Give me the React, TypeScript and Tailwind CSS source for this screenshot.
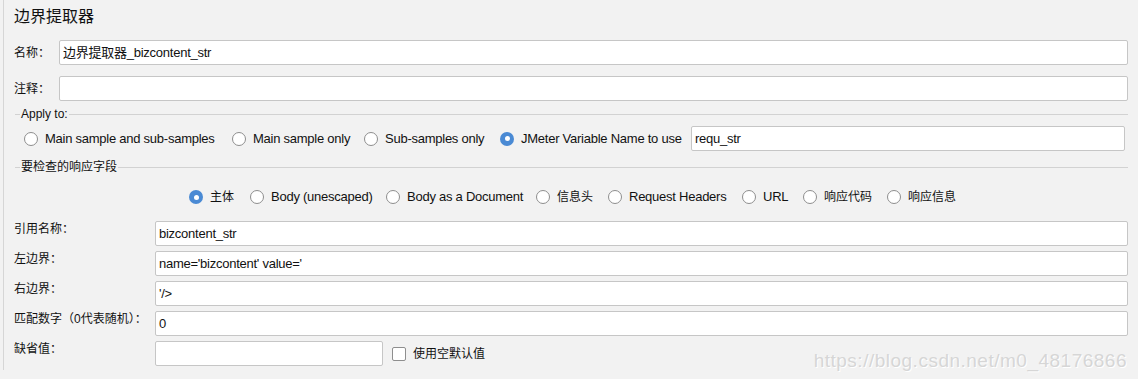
import React from 'react';

const applyOptions = [
  { label: 'Main sample and sub-samples', checked: false, w: 'w-[208px]' },
  { label: 'Main sample only', checked: false, w: 'w-[132px]' },
  { label: 'Sub-samples only', checked: false, w: 'w-[136px]' },
  { label: 'JMeter Variable Name to use', checked: true, w: 'w-[191px]' },
];

const fieldOptions = [
  { label: '主体', checked: true, cjk: true, w: 'w-[61px]' },
  { label: 'Body (unescaped)', checked: false, w: 'w-[136px]' },
  { label: 'Body as a Document', checked: false, w: 'w-[150px]' },
  { label: '信息头', checked: false, cjk: true, w: 'w-[72px]' },
  { label: 'Request Headers', checked: false, w: 'w-[134px]' },
  { label: 'URL', checked: false, w: 'w-[61px]' },
  { label: '响应代码', checked: false, cjk: true, w: 'w-[84px]' },
  { label: '响应信息', checked: false, cjk: true, w: 'w-[80px]' },
];

const rows = [
  { label: '引用名称：', value: 'bizcontent_str' },
  { label: '左边界：', value: "name='bizcontent' value='" },
  { label: '右边界：', value: "'/>" },
  { label: '匹配数字（0代表随机）：', value: '0' },
];

function Radio({ label, checked, cjk, w }: { label: string; checked: boolean; cjk?: boolean; w: string }) {
  return (
    <div className={`flex shrink-0 items-center gap-[7px] ${w}`}>
      {checked ? (
        <span className="flex h-[14px] w-[14px] items-center justify-center rounded-full bg-[#4a8ad4]">
          <span className="h-[5px] w-[5px] rounded-full bg-white" />
        </span>
      ) : (
        <span className="h-[14px] w-[14px] rounded-full border border-[#8e8e8e] bg-white" />
      )}
      <span className={`whitespace-nowrap leading-[16px] ${cjk ? 'text-[12px] tracking-normal' : ''}`}>{label}</span>
    </div>
  );
}

function TextBox({ value, className }: { value?: string; className: string }) {
  return (
    <div
      className={`flex h-[25px] items-center rounded-[2px] border border-[#c6c6c6] bg-white px-[3px] ${className}`}
    >
      {value}
    </div>
  );
}

function Legend({ title }: { title: string }) {
  return (
    <div className="flex items-center pl-[1px] pr-[10px]">
      <span className="h-px w-[5px] bg-[#d2d2d2]" />
      <span className="px-[1px] text-[12px] leading-[14px] tracking-normal">{title}</span>
      <span className="h-px flex-1 bg-[#d2d2d2]" />
    </div>
  );
}

const labelCls = 'text-[12px] tracking-normal whitespace-nowrap';

export default function App() {
  return (
    <div className="relative flex h-[379px] w-[1138px] bg-[#f2f2f2] text-[13px] tracking-[-0.25px] text-[#111] font-['Liberation_Sans','Noto_Sans_CJK_SC',sans-serif]">
      <div className="w-[3px]" />
      <div className="mb-[9px] flex flex-1 flex-col border-l border-[#d6d6d6] pl-[10px]">
        <div className="h-[40px] pt-[5px] text-[16px] leading-[24px] tracking-normal">边界提取器</div>

        <div className="flex h-[25px] items-center pr-[10px]">
          <span className={`w-[45px] ${labelCls}`}>名称：</span>
          <TextBox value="边界提取器_bizcontent_str" className="flex-1" />
        </div>

        <div className="mt-[11px] flex h-[25px] items-center pr-[10px]">
          <span className={`w-[45px] ${labelCls}`}>注释：</span>
          <TextBox className="flex-1" />
        </div>

        <div className="mt-[6px]">
          <Legend title="Apply to:" />
        </div>

        <div className="mt-[5px] flex h-[25px] items-center pl-[10px] pr-[13px]">
          {applyOptions.map((o) => (
            <Radio key={o.label} label={o.label} checked={o.checked} w={o.w} />
          ))}
          <TextBox value="requ_str" className="flex-1" />
        </div>

        <div className="mt-[9px]">
          <Legend title="要检查的响应字段" />
        </div>

        <div className="mt-[15px] flex items-center pl-[175px]">
          {fieldOptions.map((o) => (
            <Radio key={o.label} label={o.label} checked={o.checked} cjk={o.cjk} w={o.w} />
          ))}
        </div>

        <div className="mt-[16px] flex flex-col gap-[5px] pr-[10px]">
          {rows.map((r) => (
            <div key={r.label} className="flex h-[25px]">
              <span className={`w-[141px] shrink-0 leading-[16px] ${labelCls}`}>{r.label}</span>
              <TextBox value={r.value} className="flex-1" />
            </div>
          ))}
          <div className="flex h-[25px]">
            <span className={`w-[141px] shrink-0 leading-[16px] ${labelCls}`}>缺省值：</span>
            <TextBox className="w-[228px]" />
            <div className="ml-[9px] flex items-center gap-[7px]">
              <span className="h-[14px] w-[14px] rounded-[2px] border border-[#8e8e8e] bg-white" />
              <span className={labelCls}>使用空默认值</span>
            </div>
          </div>
        </div>
      </div>

      <div className="absolute bottom-[8px] right-[11px] text-[19px] leading-[20px] tracking-[0.5px] text-[#d6d6d6] [text-shadow:1px_1px_0_#ffffff] font-['Liberation_Sans',sans-serif]">
        https://blog.csdn.net/m0_48176866
      </div>
    </div>
  );
}
